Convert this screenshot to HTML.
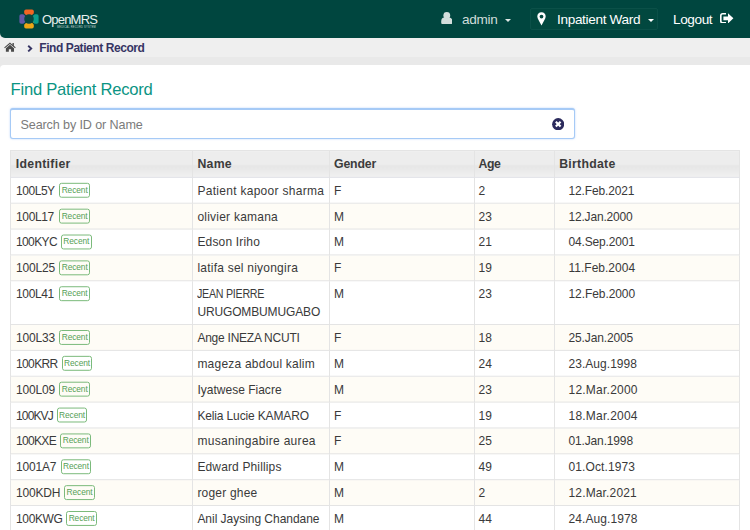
<!DOCTYPE html>
<html lang="en">
<head>
<meta charset="utf-8">
<title>Find Patient Record</title>
<style>
*{box-sizing:border-box;margin:0;padding:0}
html,body{width:750px;height:530px;overflow:hidden}
body{background:#e9e9e9;font-family:"Liberation Sans",sans-serif;color:#363463;position:relative}
#header{position:absolute;left:0;top:0;width:750px;height:38px;background:#00463f;border-bottom-left-radius:5px;color:#fff}
#logo{position:absolute;left:19px;top:8.7px}
#logotext{position:absolute;left:42px;top:11.5px;font-size:13px;color:#e9f0ee;letter-spacing:-0.8px;line-height:16px}
#logosub{position:absolute;left:57px;top:26px;font-size:2.6px;letter-spacing:0.2px;color:#c9d9d6;line-height:3px;white-space:nowrap}
.nav{position:absolute;top:0.7px;height:38px;line-height:38px;font-size:13.6px;white-space:nowrap}
#user{left:462px;color:#cfdcda;letter-spacing:-0.3px}
#loc{left:557px;color:#fff;letter-spacing:-0.34px}
#logout{left:673px;color:#fff;letter-spacing:-0.4px}
#locbox{position:absolute;left:530px;top:7.5px;width:127.5px;height:22px;border:1px solid #0b5048;background:#02483f;border-radius:2px}
.caret{position:absolute;width:0;height:0;border-left:3.5px solid transparent;border-right:3.5px solid transparent;border-top:3.5px solid #fff;top:19px}
#crumbs{position:absolute;left:0;top:38px;width:750px;height:19px;background:#efefef}
#crumbs .t{position:absolute;left:39.3px;top:0.4px;line-height:20px;font-size:12px;font-weight:bold;color:#363463;white-space:nowrap;letter-spacing:-0.43px}
#content{position:absolute;left:0;top:65px;width:750px;height:465px;background:#fff;border-top-left-radius:4px}
h2{position:absolute;left:10.6px;top:14.3px;font-size:16.6px;font-weight:normal;color:#0b9483;line-height:22px;white-space:nowrap;letter-spacing:-0.25px}
#search{position:absolute;left:10.3px;top:43.2px;width:564.5px;height:30.8px;border:1.2px solid #a6caf6;border-top-width:2.4px;border-radius:3px;background:#fff;box-shadow:0 0 2px rgba(130,180,245,.6)}
#search span{position:absolute;left:9.2px;top:1.4px;line-height:27px;font-size:12.6px;color:#7b7b7b;white-space:nowrap;letter-spacing:-0.12px}
table{position:absolute;left:10px;top:84.86px;width:729px;transform:scaleY(0.9945);transform-origin:0 0;border-collapse:collapse;table-layout:fixed;font-size:12px;color:#3a3a3a}
th,td{border:1px solid #e4e4e4;padding:3.5px 4px 3.5px 5.2px;line-height:18px;text-align:left;vertical-align:top;white-space:nowrap}
th{background:linear-gradient(#ededed 0%,#ededed 50%,#e6e6e6 56%,#f1f1f1 100%);border-bottom-color:#e1e2e8;font-weight:bold;color:#3c3c3c;height:27px;padding-top:4.2px;padding-left:4.9px;font-size:12.3px}
td{height:26px}
tr:nth-child(odd) td{background:#fefcf6}
tr:nth-child(even) td{background:#fff}
th:nth-child(1){padding-left:4.7px}td:nth-child(1){padding-left:5px}
th:nth-child(2),td:nth-child(2){padding-left:4.4px}
th:nth-child(3),td:nth-child(3){padding-left:4px}
th:nth-child(4),td:nth-child(4){padding-left:3.6px}
th:nth-child(5){padding-left:4.2px}
td.b{padding-left:13.5px}
.r{display:inline-block;border:1px solid #7aba7a;border-radius:2.5px;color:#55a055;font-size:8.4px;line-height:13px;height:14.9px;padding:0 1.4px;vertical-align:1.7px;letter-spacing:-0.1px}
</style>
</head>
<body>
<div id="header">
  <svg id="logo" width="20" height="20" viewBox="0 0 20 20">
    <rect x="5.2" y="0.4" width="9.6" height="7" rx="1.8" fill="#f26522"/>
    <rect x="12.6" y="5.2" width="7" height="9.6" rx="1.8" fill="#0a9d8e"/>
    <rect x="5.2" y="12.6" width="9.6" height="7" rx="1.8" fill="#eea616"/>
    <rect x="0.4" y="5.2" width="7" height="9.6" rx="1.8" fill="#6259a8"/>
    <path d="M3.6 3.6 L16.4 16.4 M16.4 3.6 L3.6 16.4" stroke="#00463f" stroke-width="1.1"/>
    <circle cx="10" cy="10" r="4.8" fill="#07483f"/>
  </svg>
  <div id="logotext">OpenMRS</div>
  <div id="logosub">MEDICAL RECORD SYSTEM</div>

  <svg style="position:absolute;left:440.8px;top:11.6px" width="11.6" height="12.4" viewBox="0 0 11.6 12.4"><circle cx="5.8" cy="3.5" r="3.4" fill="#d3dedc"/><path d="M0.2 10.6 V9.4 Q0.2 5.6 3.4 5.6 Q5.8 7.2 8.2 5.6 Q11.4 5.6 11.4 9.4 V10.6 Q11.4 12.2 9.8 12.2 H1.8 Q0.2 12.2 0.2 10.6 Z" fill="#d3dedc"/></svg>
  <div class="nav" id="user">admin</div>
  <div class="caret" style="left:505px;border-top-color:#dfe8e6"></div>

  <div id="locbox"></div>
  <svg style="position:absolute;left:537px;top:12px" width="9" height="14" viewBox="0 0 9 14"><path d="M4.5 0.3 C1.9 0.3 0.3 2.2 0.3 4.5 C0.3 6.6 2.6 9.6 4.5 13.4 C6.4 9.6 8.7 6.6 8.7 4.5 C8.7 2.2 7.1 0.3 4.5 0.3 Z M4.5 2.7 A1.9 1.9 0 1 1 4.5 6.5 A1.9 1.9 0 1 1 4.5 2.7 Z" fill="#fff" fill-rule="evenodd"/></svg>
  <div class="nav" id="loc">Inpatient Ward</div>
  <div class="caret" style="left:648px"></div>

  <div class="nav" id="logout">Logout</div>
  <svg style="position:absolute;left:720.2px;top:12.6px" width="13.5" height="10.7" viewBox="0 0 13.5 10.7"><path d="M6 0.8 H2.7 Q0.8 0.8 0.8 2.7 V8 Q0.8 9.9 2.7 9.9 H6" fill="none" stroke="#fff" stroke-width="1.6"/><path d="M3.4 3.4 H8 V0.2 L13.4 5.35 L8 10.5 V7.3 H3.4 Z" fill="#fff"/></svg>
</div>

<div id="crumbs">
  <svg style="position:absolute;left:4.2px;top:3.8px" width="11.9" height="10.2" viewBox="0 0 14 12"><path d="M7 0.6 L0.2 6.4 L1 7.3 L7 2.3 L13 7.3 L13.8 6.4 L11.6 4.5 V1.2 H10 V3.1 Z" fill="#4a4a4a"/><path d="M7 3.3 L2.2 7.3 V11.6 H5.7 V8.4 H8.3 V11.6 H11.8 V7.3 Z" fill="#4a4a4a"/></svg>
  <svg style="position:absolute;left:27.2px;top:7.2px" width="5.6" height="7.2" viewBox="0 0 5.6 7.2"><path d="M1.2 0.8 L4.2 3.6 L1.2 6.4" fill="none" stroke="#363463" stroke-width="1.9"/></svg>
  <div class="t">Find Patient Record</div>
</div>

<div id="content">
  <h2>Find Patient Record</h2>
  <div id="search"><span>Search by ID or Name</span>
    <svg style="position:absolute;left:540.3px;top:7.4px" width="12.4" height="12.4" viewBox="0 0 12 12"><circle cx="6" cy="6" r="5.9" fill="#2b2a5c"/><path d="M3.7 3.7 L8.3 8.3 M8.3 3.7 L3.7 8.3" stroke="#fff" stroke-width="2.1"/></svg>
  </div>
  <table>
    <colgroup><col style="width:182px"><col style="width:137px"><col style="width:145px"><col style="width:80px"><col style="width:185px"></colgroup>
    <tr><th><span id="h0" style="letter-spacing:0.31px">Identifier</span></th><th><span id="h1" style="letter-spacing:0.27px">Name</span></th><th><span id="h2" style="letter-spacing:-0.16px">Gender</span></th><th><span id="h3" style="letter-spacing:-0.48px">Age</span></th><th><span id="h4" style="letter-spacing:0.26px">Birthdate</span></th></tr>
    <tr><td><span id="i0" style="letter-spacing:-0.45px">100L5Y</span><span class="r" id="b0" style="margin-left:4.60px">Recent</span></td><td><span id="n0_0" style="letter-spacing:0.29px">Patient kapoor sharma</span></td><td>F</td><td>2</td><td class="b"><span id="d0" style="letter-spacing:-0.15px">12.Feb.2021</span></td></tr>
    <tr><td><span id="i1" style="letter-spacing:-0.35px">100L17</span><span class="r" id="b1" style="margin-left:5.31px">Recent</span></td><td><span id="n1_0" style="letter-spacing:0.23px">olivier kamana</span></td><td>M</td><td>23</td><td class="b"><span id="d1" style="letter-spacing:-0.19px">12.Jan.2000</span></td></tr>
    <tr><td><span id="i2" style="letter-spacing:-0.63px">100KYC</span><span class="r" id="b2" style="margin-left:4.00px">Recent</span></td><td><span id="n2_0" style="letter-spacing:0.18px">Edson Iriho</span></td><td>M</td><td>21</td><td class="b"><span id="d2" style="letter-spacing:-0.16px">04.Sep.2001</span></td></tr>
    <tr><td><span id="i3" style="letter-spacing:-0.16px">100L25</span><span class="r" id="b3" style="margin-left:4.21px">Recent</span></td><td><span id="n3_0" style="letter-spacing:0.23px">latifa sel niyongira</span></td><td>F</td><td>19</td><td class="b"><span id="d3" style="letter-spacing:0.01px">11.Feb.2004</span></td></tr>
    <tr><td><span id="i4" style="letter-spacing:-0.35px">100L41</span><span class="r" id="b4" style="margin-left:5.31px">Recent</span></td><td><span id="n4_0" style="display:inline-block;line-height:14px;letter-spacing:-0.3px;transform:scaleX(0.891);transform-origin:0 50%">JEAN PIERRE</span><br><span id="n4_1" style="letter-spacing:-0.14px">URUGOMBUMUGABO</span></td><td>M</td><td>23</td><td class="b"><span id="d4" style="letter-spacing:-0.08px">12.Feb.2000</span></td></tr>
    <tr><td><span id="i5" style="letter-spacing:-0.16px">100L33</span><span class="r" id="b5" style="margin-left:4.21px">Recent</span></td><td><span id="n5_0" style="letter-spacing:-0.24px">Ange INEZA NCUTI</span></td><td>F</td><td>18</td><td class="b"><span id="d5" style="letter-spacing:-0.13px">25.Jan.2005</span></td></tr>
    <tr><td><span id="i6" style="letter-spacing:-0.63px">100KRR</span><span class="r" id="b6" style="margin-left:4.10px">Recent</span></td><td><span id="n6_0" style="letter-spacing:0.22px">mageza abdoul kalim</span></td><td>M</td><td>24</td><td class="b"><span id="d6" style="letter-spacing:0.04px">23.Aug.1998</span></td></tr>
    <tr><td><span id="i7" style="letter-spacing:-0.16px">100L09</span><span class="r" id="b7" style="margin-left:4.21px">Recent</span></td><td><span id="n7_0" style="letter-spacing:0.01px">Iyatwese Fiacre</span></td><td>M</td><td>23</td><td class="b"><span id="d7" style="letter-spacing:0.23px">12.Mar.2000</span></td></tr>
    <tr><td><span id="i8" style="letter-spacing:-0.86px">100KVJ</span><span class="r" id="b8" style="margin-left:3.81px">Recent</span></td><td><span id="n8_0" style="letter-spacing:-0.14px">Kelia Lucie KAMARO</span></td><td>F</td><td>19</td><td class="b"><span id="d8" style="letter-spacing:0.23px">18.Mar.2004</span></td></tr>
    <tr><td><span id="i9" style="letter-spacing:-0.67px">100KXE</span><span class="r" id="b9" style="margin-left:4.31px">Recent</span></td><td><span id="n9_0" style="letter-spacing:0.30px">musaningabire aurea</span></td><td>F</td><td>25</td><td class="b"><span id="d9" style="letter-spacing:-0.15px">01.Jan.1998</span></td></tr>
    <tr><td><span id="i10" style="letter-spacing:-0.20px">1001A7</span><span class="r" id="b10" style="margin-left:4.40px">Recent</span></td><td><span id="n10_0" style="letter-spacing:0.14px">Edward Phillips</span></td><td>M</td><td>49</td><td class="b"><span id="d10" style="letter-spacing:0.10px">01.Oct.1973</span></td></tr>
    <tr><td><span id="i11" style="letter-spacing:-0.18px">100KDH</span><span class="r" id="b11" style="margin-left:3.90px">Recent</span></td><td><span id="n11_0" style="letter-spacing:0.20px">roger ghee</span></td><td>M</td><td>2</td><td class="b"><span id="d11" style="letter-spacing:0.15px">12.Mar.2021</span></td></tr>
    <tr><td><span id="i12" style="letter-spacing:-0.36px">100KWG</span><span class="r" id="b12" style="margin-left:3.71px">Recent</span></td><td><span id="n12_0" style="letter-spacing:-0.03px">Anil Jaysing Chandane</span></td><td>M</td><td>44</td><td class="b"><span id="d12" style="letter-spacing:0.08px">24.Aug.1978</span></td></tr>
  </table>
</div>
</body>
</html>
